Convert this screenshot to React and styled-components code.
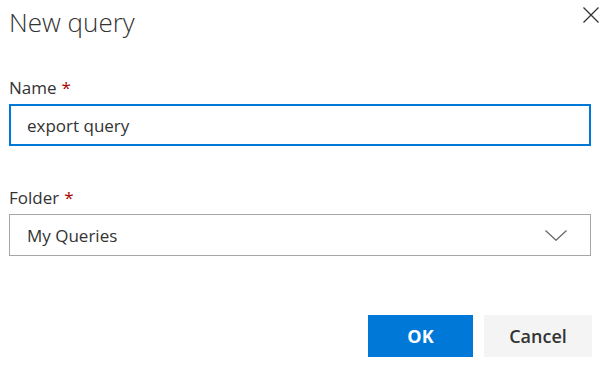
import React from "react";
import styled, { createGlobalStyle } from "styled-components";

const Global = createGlobalStyle`
  html, body { margin: 0; padding: 0; background: #fff; }
  body { font-family: "Open Sans", "Liberation Sans", sans-serif; color: #333; }
  * { box-sizing: border-box; }
`;

const Dialog = styled.div`
  width: 602px;
  height: 365px;
  padding: 4px 11px 0 9px;
  display: flex;
  flex-direction: column;
  position: relative;
`;

const Header = styled.div`
  display: flex;
  justify-content: space-between;
  align-items: flex-start;
  height: 36px;
`;

const Title = styled.h1`
  margin: 0;
  padding-left: 0px;
  font-size: 26px;
  line-height: 36px;
  font-weight: 300;
  color: #333;
`;

const CloseButton = styled.button`
  position: absolute;
  top: 7px;
  right: 3px;
  width: 16px;
  height: 16px;
  padding: 0;
  border: none;
  background: none;
  display: flex;
  cursor: pointer;
`;

const Field = styled.div`
  display: flex;
  flex-direction: column;
  margin-top: ${(p) => p.$top}px;
`;

const Label = styled.label`
  font-size: 17px;
  line-height: 24px;
  color: #333;
  margin-bottom: 4px;
  display: flex;
  gap: 5px;
`;

const Required = styled.span`
  color: #a80000;
  font-size: 17px;
`;

const TextInput = styled.input`
  height: 42px;
  width: 100%;
  border: 2px solid #0078d7;
  padding: 0 0 0 16px;
  font-family: "Open Sans", "Liberation Sans", sans-serif;
  font-size: 17px;
  color: #333;
  outline: none;
  background: #fff;
`;

const Select = styled.div`
  height: 42px;
  border: 1px solid #a6a6a6;
  display: flex;
  align-items: center;
  justify-content: space-between;
  padding: 0 23px 0 17px;
  font-size: 17px;
  color: #333;
`;

const Footer = styled.div`
  margin-top: 59px;
  display: flex;
  justify-content: flex-end;
  gap: 11px;
  margin-right: -1px;
`;

const Button = styled.button`
  height: 42px;
  width: ${(p) => p.$w}px;
  border: none;
  font-family: "Open Sans", "Liberation Sans", sans-serif;
  font-size: 18px;
  font-weight: ${(p) => (p.$primary ? 700 : 600)};
  background: ${(p) => (p.$primary ? "#0078d7" : "#f4f4f4")};
  color: ${(p) => (p.$primary ? "#fff" : "#333")};
  cursor: pointer;
`;

export default function App() {
  return (
    <>
      <Global />
      <Dialog>
        <Header>
          <Title>New query</Title>
        </Header>
        <CloseButton aria-label="Close">
          <svg width="16" height="16" viewBox="0 0 16 16">
            <path d="M0.5 0.5 L15.5 15.5 M15.5 0.5 L0.5 15.5" stroke="#333" strokeWidth="1.3" fill="none" />
          </svg>
        </CloseButton>
        <Field $top={36}>
          <Label>
            Name<Required>*</Required>
          </Label>
          <TextInput defaultValue="export query" />
        </Field>
        <Field $top={40}>
          <Label>
            Folder<Required>*</Required>
          </Label>
          <Select>
            <span>My Queries</span>
            <svg width="22" height="11" viewBox="0 0 22 11">
              <path d="M0.5 0.5 L11 10.3 L21.5 0.5" stroke="#666" strokeWidth="1.2" fill="none" />
            </svg>
          </Select>
        </Field>
        <Footer>
          <Button $primary $w={105}>OK</Button>
          <Button $w={108}>Cancel</Button>
        </Footer>
      </Dialog>
    </>
  );
}
